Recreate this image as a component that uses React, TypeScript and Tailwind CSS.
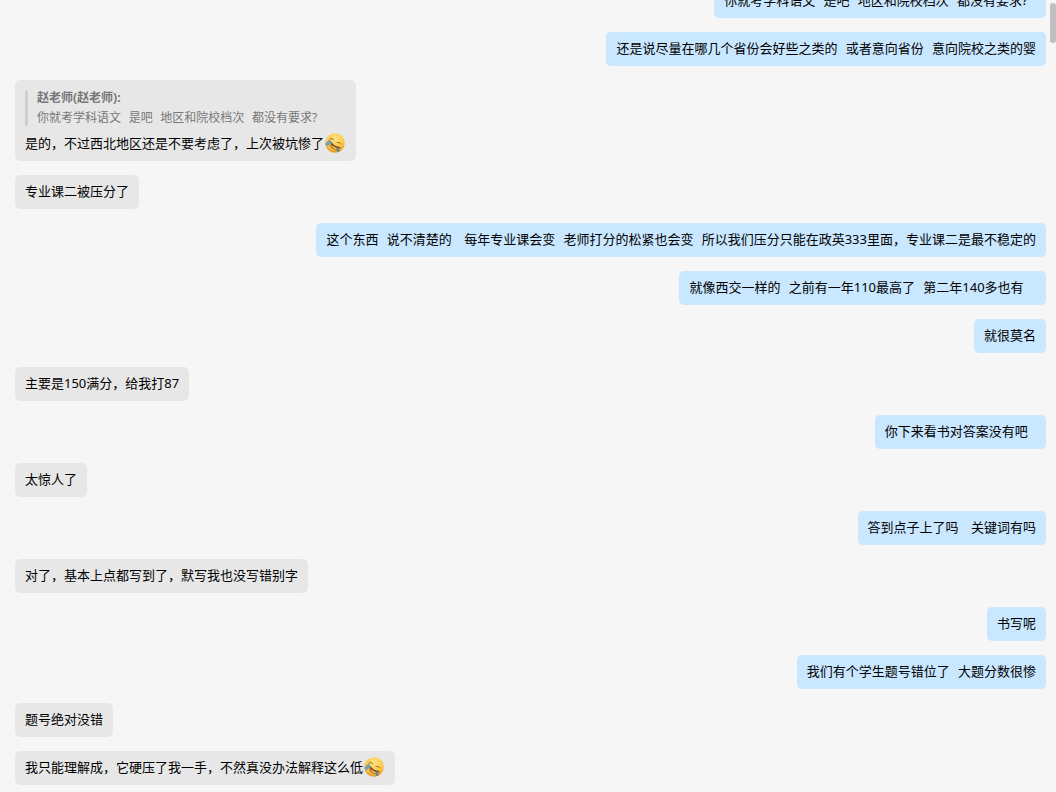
import clsx from "clsx";

interface Quote {
  author: string;
  text: string;
}

interface Message {
  id: number;
  mine?: boolean;
  text: string;
  quote?: Quote;
  emoji?: boolean;
}

const messages: Message[] = [
  { id: 1, mine: true, text: "你就考学科语文  是吧  地区和院校档次  都没有要求?  " },
  { id: 2, mine: true, text: "还是说尽量在哪几个省份会好些之类的  或者意向省份  意向院校之类的婴" },
  {
    id: 3,
    text: "是的，不过西北地区还是不要考虑了，上次被坑惨了",
    quote: {
      author: "赵老师(赵老师):",
      text: "你就考学科语文  是吧  地区和院校档次  都没有要求?",
    },
    emoji: true,
  },
  { id: 4, text: "专业课二被压分了" },
  {
    id: 5,
    mine: true,
    text: "这个东西  说不清楚的   每年专业课会变  老师打分的松紧也会变  所以我们压分只能在政英333里面，专业课二是最不稳定的",
  },
  { id: 6, mine: true, text: "就像西交一样的  之前有一年110最高了  第二年140多也有   " },
  { id: 7, mine: true, text: "就很莫名" },
  { id: 8, text: "主要是150满分，给我打87" },
  { id: 9, mine: true, text: "你下来看书对答案没有吧  " },
  { id: 10, text: "太惊人了" },
  { id: 11, mine: true, text: "答到点子上了吗   关键词有吗" },
  { id: 12, text: "对了，基本上点都写到了，默写我也没写错别字" },
  { id: 13, mine: true, text: "书写呢" },
  { id: 14, mine: true, text: "我们有个学生题号错位了  大题分数很惨" },
  { id: 15, text: "题号绝对没错" },
  { id: 16, text: "我只能理解成，它硬压了我一手，不然真没办法解释这么低", emoji: true },
];

function LaughCry() {
  return (
    <svg viewBox="0 0 40 40" className="mx-px size-5 shrink-0" role="img" aria-label="笑哭">
      <defs>
        <radialGradient id="face" cx="0.5" cy="0.3" r="0.75">
          <stop offset="0" stopColor="#ffe48a" />
          <stop offset="0.6" stopColor="#fbc847" />
          <stop offset="1" stopColor="#e08c1c" />
        </radialGradient>
      </defs>
      <circle cx="20" cy="20" r="19.5" fill="url(#face)" />
      <g fill="none" stroke="#a8691c" strokeWidth="2" strokeLinecap="round">
        <path d="M10 12c3-2 6-1 8 2" />
        <path d="M24 19c3-1 6 0 8 3" />
      </g>
      <path d="M11 18c3 6 9 10 19 11c-3 5-9 6-14 3c-5-3-7-8-5-14z" fill="#b5701d" />
      <path d="M12 19c4 6 10 9 18 10" fill="none" stroke="#6b4318" strokeWidth="2.5" strokeLinecap="round" />
      <path d="M14 25c3 3 7 5 11 6c-4 2-10 0-11-6z" fill="#f6d58c" />
      <path d="M10 13c-3 0-4 4-8 7c-3 3 1 7 5 5c3-2 3-4 6-3c-1-3 0-6-3-9z" fill="#7c9eb3" />
      <path d="M23 29c3 0 6 1 6 4c0 3-1 5-3 5c-3 0-2-3-3-5z" fill="#68818e" />
    </svg>
  );
}

// runs of spaces are a little wider than the text font would make them
function Spaced({ text }: { text: string }) {
  return (
    <span className="whitespace-pre-wrap">
      {text.split(/( +)/).map((part, i) =>
        part.startsWith(" ") ? (
          <span key={i} className="font-['DejaVu_Sans'] leading-none">
            {part}
          </span>
        ) : (
          part
        )
      )}
    </span>
  );
}

function Bubble({ message }: { message: Message }) {
  const { mine, text, quote, emoji } = message;
  return (
    <li
      className={clsx(
        "rounded-[5px] px-[10px] pb-2 pt-[6px]",
        mine ? "self-end bg-[#c9e7ff]" : "self-start bg-[#e7e7e7]"
      )}
    >
      {quote && (
        <blockquote className="mb-[5px] mt-[2px] flex gap-[9px] text-xs leading-5 text-[#777]">
          <span className="my-[2px] w-[3px] rounded-full bg-[#cfcfcf]" />
          <div>
            <p className="font-bold">{quote.author}</p>
            <p>
              <Spaced text={quote.text} />
            </p>
          </div>
        </blockquote>
      )}
      <div className="flex items-center">
        <Spaced text={text} />
        {emoji && <LaughCry />}
      </div>
    </li>
  );
}

export default function App() {
  return (
    <main className="flex h-screen overflow-hidden bg-[#f6f6f6] font-['Noto_Sans','Noto_Sans_CJK_SC',sans-serif] text-[13px] leading-5 text-black">
      <ul className="-mt-4 flex flex-1 flex-col gap-[14px] pl-[15px] pr-1">
        {messages.map((message) => (
          <Bubble key={message.id} message={message} />
        ))}
      </ul>
      <div className="mt-[3px] h-10 w-[6px] rounded-full bg-[#c0c0c4]" />
    </main>
  );
}
